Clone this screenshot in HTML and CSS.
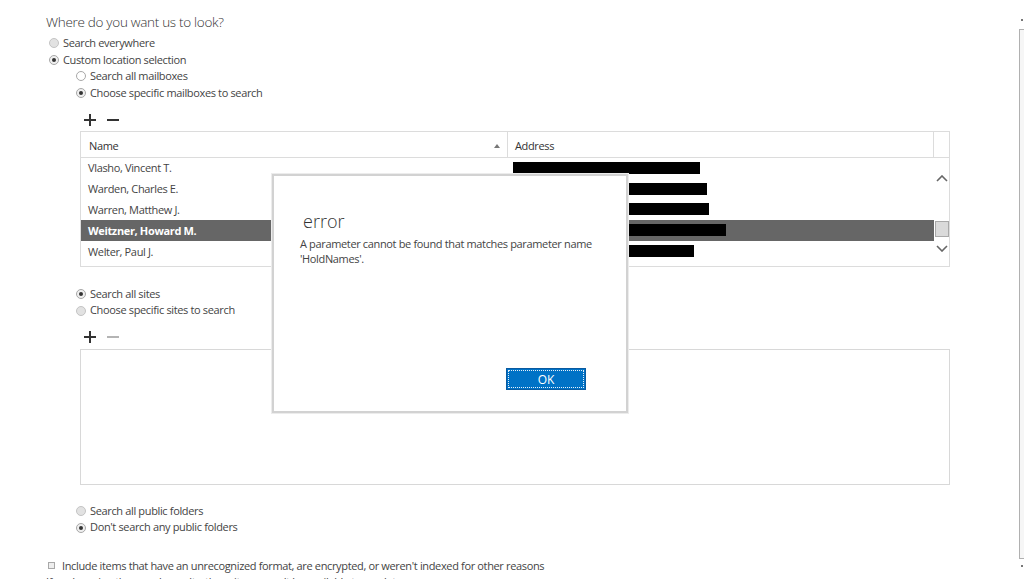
FILE: index.html
```html
<!DOCTYPE html>
<html>
<head>
<meta charset="utf-8">
<title>Search locations</title>
<link rel="stylesheet" href="styles.css">
</head>
<body>
<div class="page">
  <h1 class="title">Where do you want us to look?</h1>
  <div class="opts top">
    <div class="opt"><span class="radio dim"></span>Search everywhere</div>
    <div class="opt"><span class="radio on"></span>Custom location selection</div>
  </div>
  <div class="sub">
    <div class="opts">
      <div class="opt"><span class="radio"></span>Search all mailboxes</div>
      <div class="opt"><span class="radio on"></span>Choose specific mailboxes to search</div>
    </div>
    <div class="tools">
      <svg class="tool" width="14" height="14" viewBox="0 0 14 14"><path d="M7 1v12M1 7h12" stroke="#333" stroke-width="2"/></svg>
      <svg class="tool" width="14" height="14" viewBox="0 0 14 14"><path d="M1 7h12" stroke="#333" stroke-width="2"/></svg>
    </div>
    <div class="grid">
      <div class="grid-head">
        <div class="h-name">Name<span class="sort"></span></div>
        <div class="h-addr">Address</div>
        <div class="h-sb"></div>
      </div>
      <div class="grid-body">
        <div class="rows">
          <div class="row"><div class="c-name">Vlasho, Vincent T.</div><div class="c-addr"><span class="redact" style="width:187px"></span></div></div>
          <div class="row"><div class="c-name">Warden, Charles E.</div><div class="c-addr"><span class="redact" style="width:194px"></span></div></div>
          <div class="row"><div class="c-name">Warren, Matthew J.</div><div class="c-addr"><span class="redact" style="width:196px"></span></div></div>
          <div class="row sel"><div class="c-name">Weitzner, Howard M.</div><div class="c-addr"><span class="redact" style="width:213px"></span></div></div>
          <div class="row"><div class="c-name">Welter, Paul J.</div><div class="c-addr"><span class="redact" style="width:181px"></span></div></div>
        </div>
        <div class="vscroll">
          <svg class="chev up" width="12" height="7" viewBox="0 0 12 7"><path d="M1 6l5-5 5 5" fill="none" stroke="#666" stroke-width="1.6"/></svg>
          <div class="thumb"></div>
          <svg class="chev down" width="12" height="7" viewBox="0 0 12 7"><path d="M1 1l5 5 5-5" fill="none" stroke="#666" stroke-width="1.6"/></svg>
        </div>
      </div>
    </div>
    <div class="opts sites">
      <div class="opt"><span class="radio on"></span>Search all sites</div>
      <div class="opt"><span class="radio dim"></span>Choose specific sites to search</div>
    </div>
    <div class="tools tools-sites">
      <svg class="tool" width="14" height="14" viewBox="0 0 14 14"><path d="M7 1v12M1 7h12" stroke="#333" stroke-width="2"/></svg>
      <svg class="tool" width="14" height="14" viewBox="0 0 14 14"><path d="M1 7h12" stroke="#b4b4b4" stroke-width="2"/></svg>
    </div>
    <div class="box"></div>
    <div class="opts folders">
      <div class="opt"><span class="radio dim"></span>Search all public folders</div>
      <div class="opt"><span class="radio on"></span>Don't search any public folders</div>
    </div>
  </div>
  <div class="check-line"><span class="checkbox"></span>Include items that have an unrecognized format, are encrypted, or weren't indexed for other reasons</div>
  <div class="note">If you're using the search results, these items won't be available to you later</div>
</div>

<div class="dialog">
  <div class="dlg-title">error</div>
  <div class="dlg-msg">A parameter cannot be found that matches parameter name<br>'HoldNames'.</div>
  <div class="dlg-actions"><button class="btn-ok">OK</button></div>
</div>

<div class="page-scroll">
  <span class="ps-arrow ps-top"></span>
  <div class="ps-track"></div>
  <span class="ps-arrow ps-bottom"></span>
</div>
</body>
</html>
```

FILE: styles.css
```css
html, body {
  margin: 0;
  padding: 0;
}
body {
  width: 1024px;
  height: 579px;
  overflow: hidden;
  position: relative;
  background: #fff;
  font-family: "Open Sans", "Noto Sans", sans-serif;
  font-size: 11px;
  letter-spacing: -0.35px;
  color: #444;
}
.page {
  padding: 13px 0 0 46px;
}
.title {
  margin: 0 0 4px 0;
  font-size: 13.5px;
  font-weight: 300;
  line-height: 18px;
  color: #333;
  letter-spacing: -0.3px;
}
.opts.top {
  padding-left: 3px;
}
.opt {
  display: flex;
  align-items: center;
  height: 16.5px;
  line-height: 16.5px;
  white-space: nowrap;
}
.radio {
  width: 10px;
  height: 10px;
  box-sizing: border-box;
  border: 1px solid #a8a8a8;
  border-radius: 50%;
  background: #fff;
  margin-right: 4px;
  flex: none;
  display: flex;
  align-items: center;
  justify-content: center;
}
.radio.dim {
  background: #e2e2e2;
  border-color: #c4c4c4;
}
.radio.on {
  background: #efefef;
}
.radio.on::after {
  content: "";
  width: 4px;
  height: 4px;
  border-radius: 50%;
  background: #333;
}
.sub {
  padding-left: 30px;
}
.tools {
  display: flex;
  gap: 9px;
  margin: 12px 0 4px 7px;
  height: 14px;
}
.tool {
  display: block;
}
.tools-sites {
  margin-top: 11px;
  margin-bottom: 5px;
}
.grid {
  margin-left: 4px;
  width: 870px;
  border: 1px solid #dcdcdc;
  box-sizing: border-box;
  padding-bottom: 4px;
}
.grid-head {
  display: flex;
  height: 26px;
  border-bottom: 1px solid #dcdcdc;
  box-sizing: border-box;
  color: #333;
}
.grid-head > div {
  box-sizing: border-box;
  padding-top: 2px;
  line-height: 23px;
}
.h-name {
  width: 427px;
  padding-left: 8px;
  border-right: 1px solid #dcdcdc;
  position: relative;
}
.sort {
  position: absolute;
  right: 7px;
  top: 12px;
  width: 0;
  height: 0;
  border-left: 3px solid transparent;
  border-right: 3px solid transparent;
  border-bottom: 4px solid #777;
}
.h-addr {
  width: 426px;
  padding-left: 7px;
  border-right: 1px solid #dcdcdc;
}
.h-sb {
  flex: 1;
}
.grid-body {
  display: flex;
}
.rows {
  width: 853px;
}
.row {
  display: flex;
  height: 20.8px;
  align-items: center;
  white-space: nowrap;
  padding-bottom: 1px;
  box-sizing: border-box;
}
.row.sel {
  background: #666;
  color: #fff;
  font-weight: 700;
}
.c-name {
  width: 427px;
  padding-left: 7px;
  box-sizing: border-box;
}
.c-addr {
  flex: 1;
  padding-left: 5px;
  display: flex;
  align-items: center;
}
.redact {
  display: block;
  height: 12px;
  background: #000;
}
.vscroll {
  flex: 1;
  display: flex;
  flex-direction: column;
  align-items: center;
  padding-top: 17px;
}
.chev {
  display: block;
}
.thumb {
  width: 14px;
  height: 16px;
  box-sizing: border-box;
  background: #dadada;
  border: 1px solid #a9a9a9;
  margin: 39px 0 8px 1px;
}
.opts.sites {
  margin-top: 19px;
}
.box {
  margin-left: 4px;
  width: 870px;
  height: 136px;
  border: 1px solid #d8d8d8;
  box-sizing: border-box;
}
.opts.folders {
  margin-top: 18px;
}
.check-line {
  margin-top: 21px;
  padding-left: 2px;
  display: flex;
  align-items: center;
  height: 16.5px;
  white-space: nowrap;
}
.checkbox {
  width: 7px;
  height: 7px;
  box-sizing: border-box;
  border: 1px solid #a8a8a8;
  background: #eee;
  margin-right: 7px;
  flex: none;
}
.note {
  line-height: 16.5px;
  white-space: nowrap;
  margin-top: 1px;
}
.dialog {
  position: absolute;
  left: 272px;
  top: 174px;
  width: 356px;
  height: 239px;
  box-sizing: border-box;
  background: #fff;
  border: 2px solid #d2d2d2;
  box-shadow: 0 0 0 1px #ececec;
  padding: 0 40px 21px 26px;
  display: flex;
  flex-direction: column;
}
.dlg-title {
  margin-top: 34px;
  padding-left: 3px;
  font-size: 18px;
  font-weight: 300;
  line-height: 22px;
  color: #333;
  letter-spacing: 0;
}
.dlg-msg {
  margin-top: 4px;
  line-height: 15px;
  color: #444;
  white-space: nowrap;
}
.dlg-actions {
  margin-top: auto;
  display: flex;
  justify-content: flex-end;
}
.btn-ok {
  width: 80px;
  height: 22px;
  box-sizing: border-box;
  background: #0072c6;
  border: 1px solid #0a5aa0;
  color: #fff;
  font-family: "Open Sans", "Noto Sans", sans-serif;
  font-size: 12px;
  letter-spacing: 0;
  padding: 0;
  outline: 1px dotted #e8f0f8;
  outline-offset: -3px;
}
.page-scroll {
  position: absolute;
  left: 1019px;
  top: 19px;
  width: 5px;
  height: 551px;
  display: flex;
  flex-direction: column;
  align-items: flex-start;
}
.ps-arrow {
  display: block;
  width: 2px;
  height: 2px;
  margin-left: 2px;
  background: #777;
}
.ps-top {
  margin-bottom: 8px;
}
.ps-bottom {
  margin-top: 6px;
}
.ps-track {
  width: 5px;
  height: 530px;
  box-sizing: border-box;
  border: 1px solid #b0b0b0;
  border-right: none;
  background: #f6f6f6;
}
```
